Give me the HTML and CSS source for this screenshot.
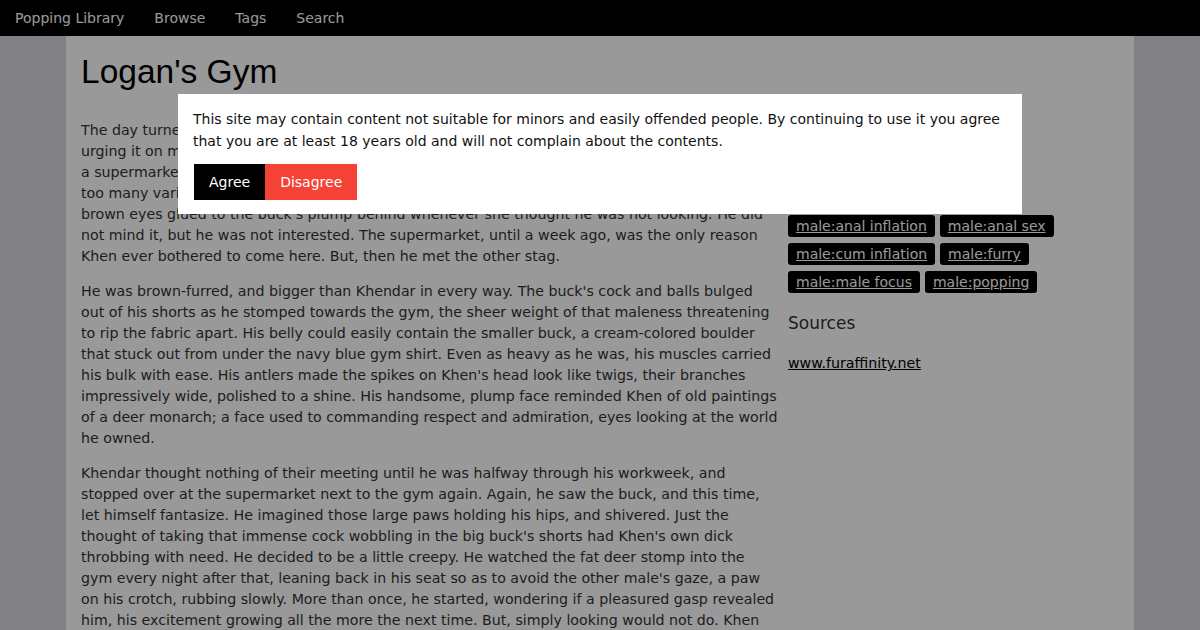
FILE: index.html
```html
<!DOCTYPE html>
<html lang="en">
<head>
    <meta charset="UTF-8">
    <meta name="viewport" content="width=device-width, initial-scale=1.0">
    <title>Logan's Gym - Popping Library</title>
    <link rel="stylesheet" href="styles.css">
</head>
<body>

    <nav class="topnav">
        <a href="#">Popping Library</a>
        <a href="#">Browse</a>
        <a href="#">Tags</a>
        <a href="#">Search</a>
    </nav>

    <div class="container">
        <h1>Logan's Gym</h1>

        <div class="columns">
            <div class="story">
                <p>The day turned out to be hot and humid, the sun beating down on the town's pavement as if
                urging it on more. Khendar had been coming to this part of town for a few weeks now; there was
                a supermarket right next to the gym, and it was the only grocery store around that did not carry
                too many various sorts of junk food. The young doe at the checkout counter always kept her big
                brown eyes glued to the buck's plump behind whenever she thought he was not looking. He did
                not mind it, but he was not interested. The supermarket, until a week ago, was the only reason
                Khen ever bothered to come here. But, then he met the other stag.</p>

                <p>He was brown-furred, and bigger than Khendar in every way. The buck's cock and balls bulged
                out of his shorts as he stomped towards the gym, the sheer weight of that maleness threatening
                to rip the fabric apart. His belly could easily contain the smaller buck, a cream-colored boulder
                that stuck out from under the navy blue gym shirt. Even as heavy as he was, his muscles carried
                his bulk with ease. His antlers made the spikes on Khen's head look like twigs, their branches
                impressively wide, polished to a shine. His handsome, plump face reminded Khen of old
                paintings of a deer monarch; a face used to commanding respect and admiration, eyes looking at
                the world he owned.</p>

                <p>Khendar thought nothing of their meeting until he was halfway through his workweek, and
                stopped over at the supermarket next to the gym again. Again, he saw the buck, and this time,
                let himself fantasize. He imagined those large paws holding his hips, and shivered. Just the
                thought of taking that immense cock wobbling in the big buck's shorts had Khen's own dick
                throbbing with need. He decided to be a little creepy. He watched the fat deer stomp into the
                gym every night after that, leaning back in his seat so as to avoid the other male's gaze, a paw
                on his crotch, rubbing slowly. More than once, he started, wondering if a pleasured gasp revealed
                him, his excitement growing all the more the next time. But, simply looking would not do. Khen
                wanted more than that.</p>
            </div>

            <aside class="sidebar">
                <h3>Tags</h3>
                <div class="tag-list">
                    <a class="tag" href="#">male:antlers</a>
                    <a class="tag" href="#">male:big belly</a>
                    <a class="tag" href="#">male:big balls</a>
                    <a class="tag" href="#">male:deer</a>
                    <a class="tag" href="#">male:anal inflation</a>
                    <a class="tag" href="#">male:anal sex</a>
                    <a class="tag" href="#">male:cum inflation</a>
                    <a class="tag" href="#">male:furry</a>
                    <a class="tag" href="#">male:male focus</a>
                    <a class="tag" href="#">male:popping</a>
                </div>

                <h3>Sources</h3>
                <a class="source" href="#">www.furaffinity.net</a>
            </aside>
        </div>
    </div>

    <!-- Age warning -->
    <div class="overlay">
        <div class="warning">
            <p>This site may contain content not suitable for minors and easily offended people. By continuing to use it you agree that you are at least 18 years old and will not complain about the contents.</p>
            <div class="warning-buttons">
                <button class="btn-agree">Agree</button>
                <button class="btn-disagree">Disagree</button>
            </div>
        </div>
    </div>

</body>
</html>
```

FILE: styles.css
```css
/* Basic styles */
body {
    font-family: "DejaVu Sans", Verdana, sans-serif;
    font-size: 14.2px;
    background-color: #d5d5de;
    color: #333;
    margin: 0;
    padding: 0;
}

.topnav {
    display: flex;
    height: 36px;
    align-items: center;
    background-color: #000;
}

.topnav a {
    color: #fff;
    font-size: 14px;
    text-decoration: none;
    padding: 0 15px;
}

.container {
    display: flow-root;
    width: 1038px;
    min-height: 600px;
    margin: 0 auto;
    padding: 0 15px;
    background-color: #fff;
}

h1 {
    font-family: "Liberation Sans", Arial, sans-serif;
    font-weight: normal;
    font-size: 33.5px;
    line-height: 38px;
    color: #000;
    margin: 17px 0 15px;
}

.columns {
    display: grid;
    grid-template-columns: 699px 1fr;
}

.story p {
    line-height: 21px;
    margin: 14px 0;
}

.sidebar {
    padding-left: 8px;
}

.sidebar h3 {
    font-size: 17px;
    font-weight: normal;
    line-height: 21px;
    margin: 20px 0 19px;
}

.sidebar h3:first-child {
    margin-top: 13px;
}

.tag-list {
    display: flex;
    flex-wrap: wrap;
    gap: 6px 5px;
}

.tag {
    background-color: #000;
    color: #fff;
    font-size: 14px;
    padding: 2px 8px;
    line-height: 18px;
    border-radius: 3px;
}

.source {
    color: #000;
    line-height: 21px;
}

/* Age warning */
.overlay {
    position: fixed;
    top: 0;
    left: 0;
    right: 0;
    bottom: 0;
    background-color: rgba(0, 0, 0, 0.4);
}

.warning {
    width: 814px;
    margin: 94px auto 0;
    padding: 14px 15px;
    background-color: #fff;
    color: #111;
}

.warning p {
    font-size: 14px;
    line-height: 22px;
    margin: 0 0 12px;
}

.warning-buttons {
    display: flex;
    padding-left: 1px;
}

.warning-buttons button {
    font-family: inherit;
    font-size: 14px;
    line-height: 20px;
    color: #fff;
    border: none;
    padding: 8px 15px;
    cursor: pointer;
}

.btn-agree {
    background-color: #000;
}

.btn-disagree {
    background-color: #f44336;
    padding: 8px 16px;
}
```
